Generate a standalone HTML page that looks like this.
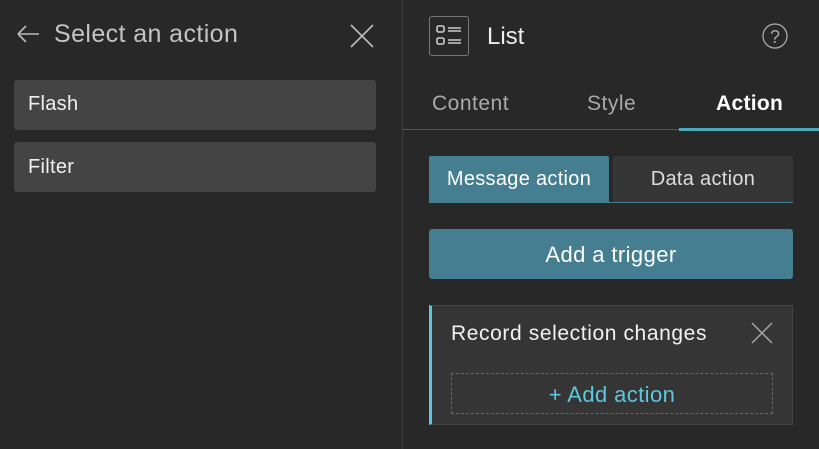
<!DOCTYPE html>
<html><head><style>
body{margin:0;width:819px;height:449px;background:#282828;font-family:"Liberation Sans",sans-serif;position:relative;overflow:hidden;color:#e6e6e6}
.a{position:absolute}
</style></head><body>
<div class="a" style="left:402px;top:0;width:1px;height:449px;background:#3e3e3e"></div>
<svg class="a" style="left:16px;top:24px" width="24" height="20"><path d="M2 10H23M2 10L10 2M2 10L10 18" stroke="#bbb" stroke-width="1.6" fill="none"/></svg>
<div class="a" style="left:54px;top:20px;font-size:25px;letter-spacing:0.4px;color:#c4c4c4">Select an action</div>
<svg class="a" style="left:349px;top:23px" width="26" height="26"><path d="M2 2L24 24M24 2L2 24" stroke="#bbb" stroke-width="1.6"/></svg>
<div class="a" style="left:14px;top:80px;width:362px;height:50px;background:#444;border-radius:3px"></div>
<div class="a" style="left:28px;top:93px;font-size:20px;letter-spacing:0.3px;color:#f0f0f0">Flash</div>
<div class="a" style="left:14px;top:142px;width:362px;height:50px;background:#444;border-radius:3px"></div>
<div class="a" style="left:28px;top:156px;font-size:20px;letter-spacing:0.3px;color:#f0f0f0">Filter</div>

<div class="a" style="left:429px;top:16px;width:38px;height:38px;border:1px solid #777;border-radius:3px"></div>
<svg class="a" style="left:436px;top:24px" width="28" height="24"><g stroke="#ccc" stroke-width="1.6" fill="none"><rect x="1" y="2" width="7" height="6" rx="1.5"/><rect x="1" y="14" width="7" height="6" rx="1.5"/><path d="M12 4H25M12 7H25M12 16H25M12 19H25"/></g></svg>
<div class="a" style="left:487px;top:23px;font-size:24px;color:#eee">List</div>
<svg class="a" style="left:762px;top:23px" width="28" height="28"><circle cx="13" cy="13" r="12" stroke="#aaa" stroke-width="1.3" fill="none"/><text x="13" y="20" font-size="18" fill="#aaa" text-anchor="middle" font-family="Liberation Sans">?</text></svg>
<div class="a" style="left:432px;top:92px;font-size:21px;letter-spacing:0.5px;color:#aaa">Content</div>
<div class="a" style="left:587px;top:92px;font-size:21px;letter-spacing:0.5px;color:#aaa">Style</div>
<div class="a" style="left:716px;top:92px;font-size:21px;letter-spacing:0.3px;color:#fff;font-weight:bold">Action</div>
<div class="a" style="left:403px;top:129px;width:416px;height:1px;background:#555"></div>
<div class="a" style="left:679px;top:128px;width:140px;height:3px;background:#4fa9bc"></div>
<div class="a" style="left:429px;top:156px;width:180px;height:47px;background:#457d91;border-radius:2px 2px 0 0"></div>
<div class="a" style="left:613px;top:156px;width:180px;height:47px;background:#363636;border-radius:2px 2px 0 0"></div>
<div class="a" style="left:429px;top:202px;width:364px;height:1px;background:#457d91"></div>
<div class="a" style="left:429px;top:168px;width:180px;text-align:center;font-size:20px;letter-spacing:0.3px;color:#fff">Message action</div>
<div class="a" style="left:613px;top:168px;width:180px;text-align:center;font-size:20px;letter-spacing:0.3px;color:#ddd">Data action</div>
<div class="a" style="left:429px;top:229px;width:364px;height:50px;background:#457d91;border-radius:3px"></div>
<div class="a" style="left:429px;top:242px;width:364px;text-align:center;font-size:22px;letter-spacing:0.4px;color:#fff">Add a trigger</div>
<div class="a" style="left:429px;top:305px;width:364px;height:120px;background:#353535;border:1px solid #444;border-left:3px solid #5ec6df;box-sizing:border-box"></div>
<div class="a" style="left:451px;top:322px;font-size:21px;letter-spacing:0.6px;color:#f2f2f2">Record selection changes</div>
<svg class="a" style="left:750px;top:321px" width="24" height="24"><path d="M2 2L22 22M22 2L2 22" stroke="#aaa" stroke-width="1.4"/></svg>
<div class="a" style="left:451px;top:373px;width:322px;height:41px;border:1px dashed #666;box-sizing:border-box"></div>
<div class="a" style="left:451px;top:382px;width:322px;text-align:center;font-size:22px;letter-spacing:0.4px;color:#5ec6df">+ Add action</div>
</body></html>
